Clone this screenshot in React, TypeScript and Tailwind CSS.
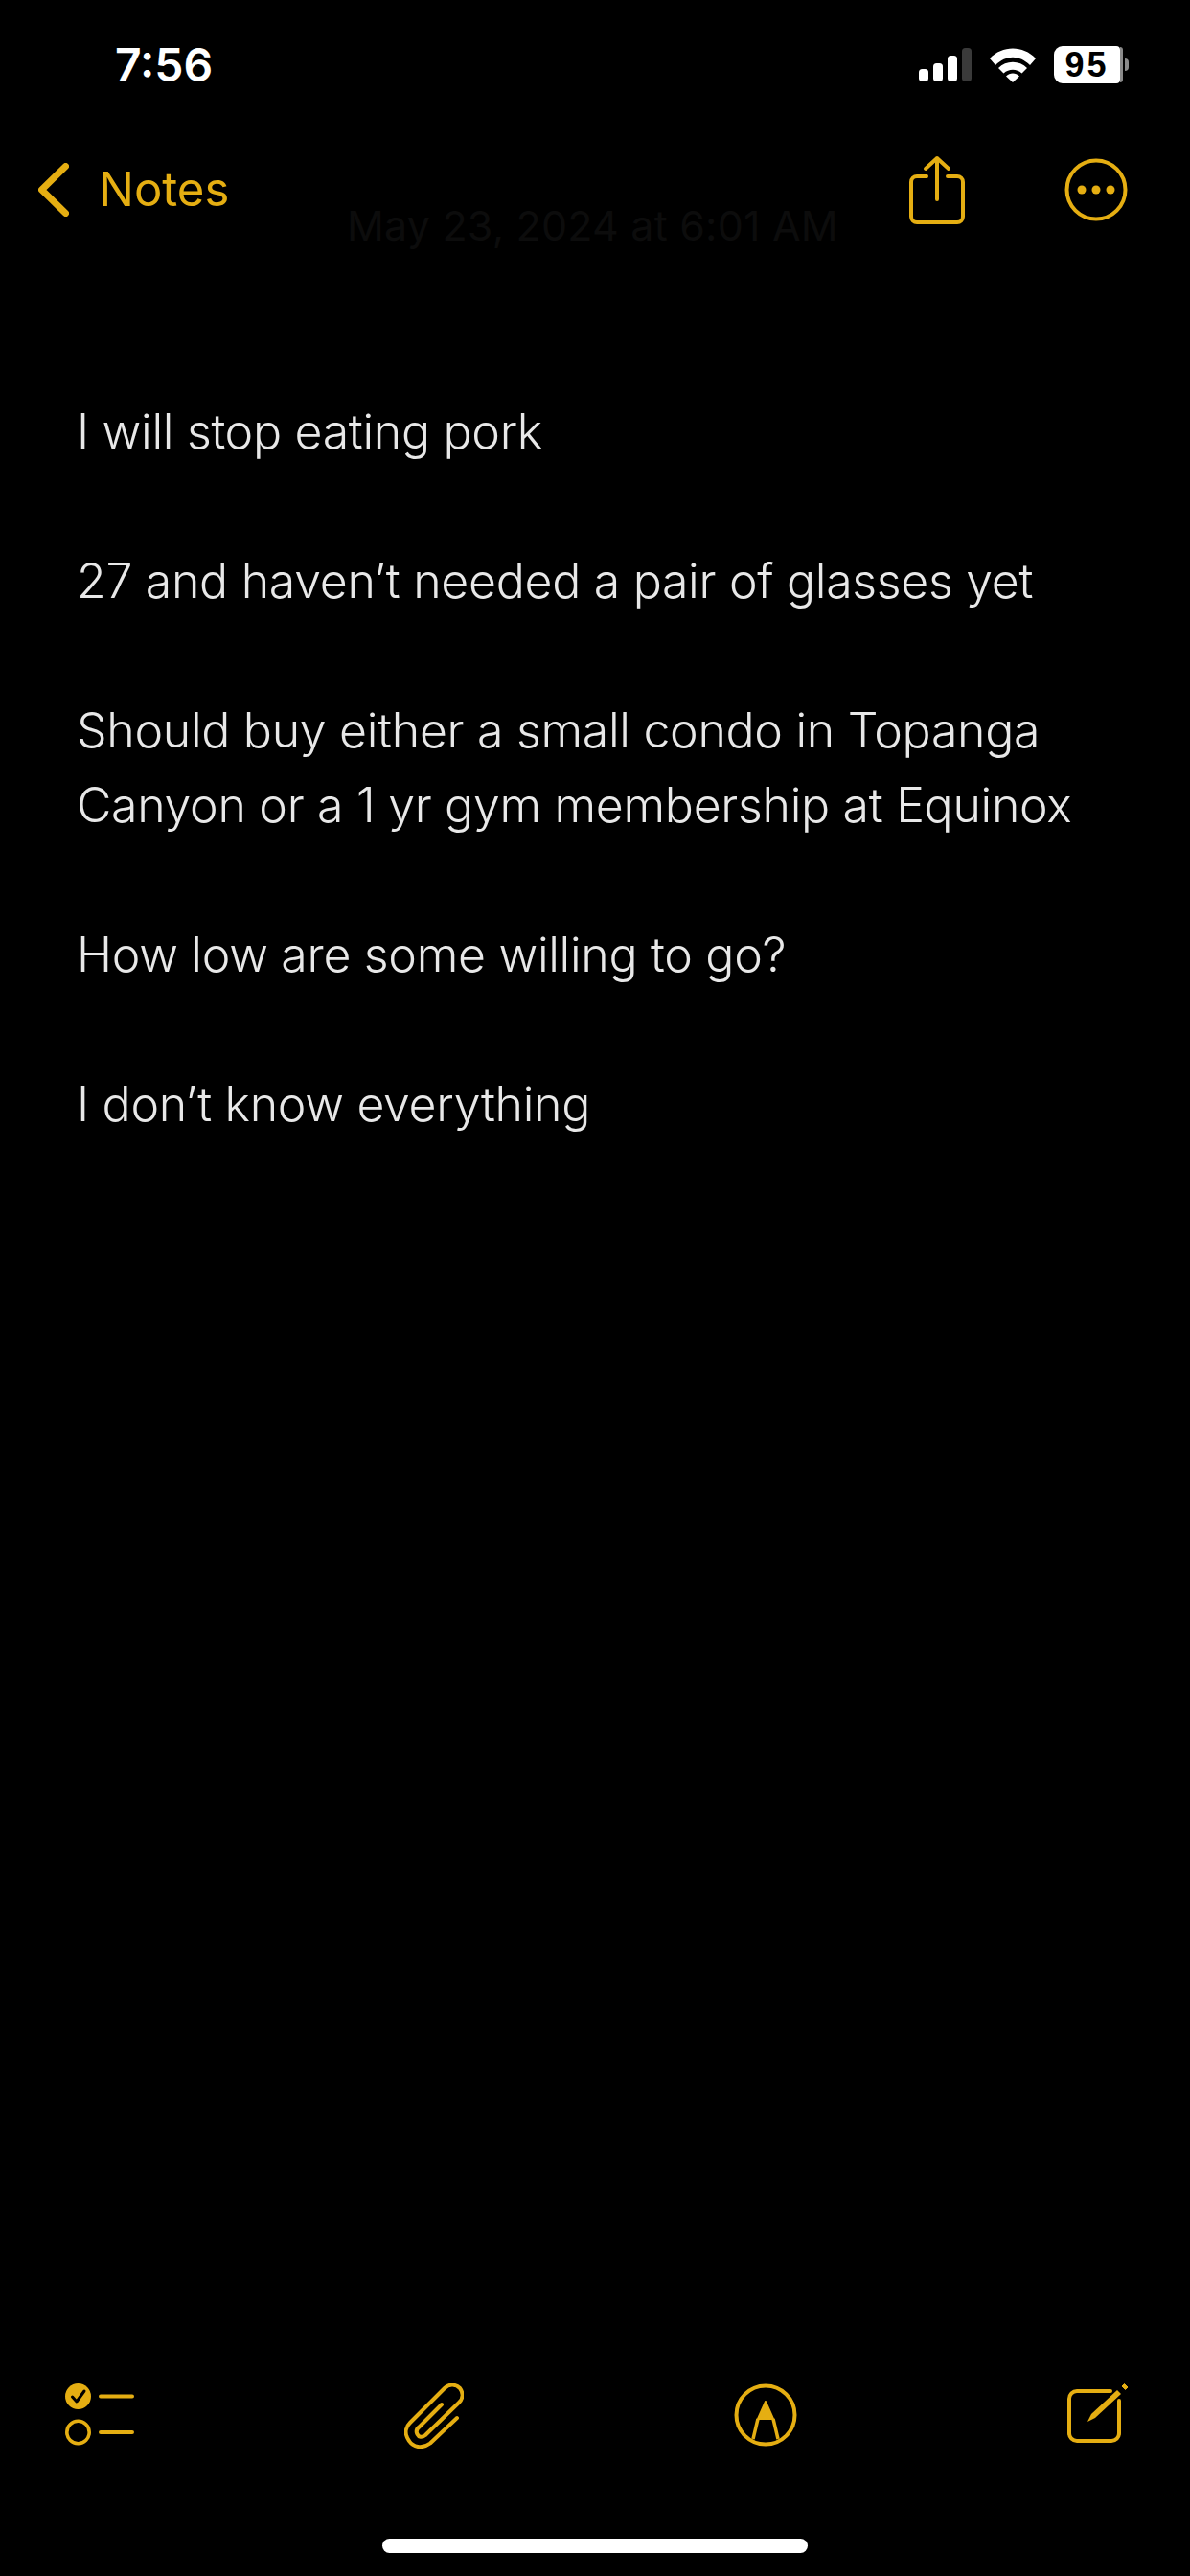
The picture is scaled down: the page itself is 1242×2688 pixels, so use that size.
const amber = "#e5ae12";

function StatusBar() {
  return (
    <div className="flex h-[150px] items-start justify-between pl-[120px] pr-[64px] pt-[48px]">
      <span className="text-[48px] font-semibold leading-[39px] text-white">7:56</span>
      <div className="flex items-center gap-[19px]">
        <svg width="56" height="36" viewBox="0 0 56 36" fill="#fff">
          <rect x="1" y="22" width="10" height="13" rx="3.5" />
          <rect x="16" y="16" width="10" height="19" rx="3.5" />
          <rect x="31" y="8" width="10" height="27" rx="3.5" />
          <rect x="46" y="0" width="10" height="35" rx="3.5" fill="#3a3a3a" />
        </svg>
        <svg width="48" height="36" viewBox="0 0 48 36" fill="#fff">
          <path d="M0 11C13-3 35-3 48 11L42 18C31 7 17 7 6 18Z" />
          <path d="M9 21C17 12.500 31 12.500 39 21L33.500 26.500C28 21.500 20 21.500 14.500 26.500Z" />
          <path d="M24 36L17 29.500C21 25.500 27 25.500 31 29.500Z" />
        </svg>
        <div className="flex items-center">
          <div className="flex h-[39px] w-[69px] items-center justify-center rounded-l-[9px] rounded-r-[4px] bg-white text-[36px] font-bold tracking-[3px] text-black [font-family:'Liberation_Sans',sans-serif]">
            95
          </div>
          <div className="h-[37px] w-[3px] rounded-r-[3px] bg-[#8a8a8a]" />
          <div className="ml-[2px] h-[13px] w-[4px] rounded-r-full bg-[#8a8a8a]" />
        </div>
      </div>
    </div>
  );
}

function NavBar() {
  return (
    <div className="relative flex h-[96px] items-center">
      <span className="absolute left-[362px] top-[60px] text-[43px] leading-[50px] tracking-[0.2px] text-[#0c0c0c]">
        May 23, 2024 at 6:01 AM
      </span>
      <svg className="ml-[40px]" width="32" height="56" viewBox="0 0 32 56" fill="none" stroke={amber} strokeWidth="7" strokeLinecap="round" strokeLinejoin="round">
        <path d="M28.500 3.500L3.500 28l25 24.500" />
      </svg>
      <span className="ml-[31px] text-[49px] leading-[60px] text-[#e5ae12]">Notes</span>
      <div className="ml-auto mr-[65px] flex items-center gap-[104px]">
        <svg width="58" height="72" viewBox="0 0 58 72" fill="none" stroke={amber} strokeWidth="4" strokeLinecap="round" strokeLinejoin="round">
          <path d="M18 22H8a6 6 0 0 0-6 6v36a6 6 0 0 0 6 6h42a6 6 0 0 0 6-6V28a6 6 0 0 0-6-6H40" />
          <path d="M29 46V3M17 14L29 3l12 11" />
        </svg>
        <svg width="66" height="66" viewBox="0 0 66 66" fill="none">
          <circle cx="33" cy="33" r="30.500" stroke={amber} strokeWidth="4" />
          <circle cx="18" cy="33" r="4.500" fill={amber} />
          <circle cx="33" cy="33" r="4.500" fill={amber} />
          <circle cx="48" cy="33" r="4.500" fill={amber} />
        </svg>
      </div>
    </div>
  );
}

function NoteBody() {
  return (
    <div className="pl-[80px] pt-[165px] text-[50px] font-light leading-[78px] tracking-[-0.3px] text-[#e8e8e8]">
      <p>I will stop eating pork</p>
      <p className="mt-[78px]">27 and haven’t needed a pair of glasses yet</p>
      <p className="mt-[78px]">
        Should buy either a small condo in Topanga
        <br />
        Canyon or a 1 yr gym membership at Equinox
      </p>
      <p className="mt-[78px]">How low are some willing to go?</p>
      <p className="mt-[78px]">I don’t know everything</p>
    </div>
  );
}

function ChecklistIcon() {
  return (
    <svg width="72" height="65" viewBox="0 0 72 65" fill="none">
      <circle cx="13.500" cy="13.500" r="13.500" fill={amber} />
      <path d="M7.500 14l4.500 5 8-11" stroke="#000" strokeWidth="3" strokeLinecap="round" strokeLinejoin="round" />
      <circle cx="13.500" cy="51" r="11.700" stroke={amber} strokeWidth="3.600" />
      <path d="M37 13.500h33M37 51h33" stroke={amber} strokeWidth="4" strokeLinecap="round" />
    </svg>
  );
}

function PaperclipIcon() {
  return (
    <svg width="62" height="68" viewBox="0 0 62 68" fill="none" stroke={amber} strokeWidth="4" strokeLinecap="round" strokeLinejoin="round">
      <path d="M55 36L27 62.500C18 69 9 66 5 60C0 53 1 46 6 41L42 5C47 0 54 1 58 5C61 9 62 15 57 20L22 54C18 57 15 56 13.500 53C12 50 13 47 16 45L39 22" />
    </svg>
  );
}

function MarkupIcon() {
  return (
    <svg width="66" height="66" viewBox="0 0 66 66" fill="none">
      <circle cx="33" cy="33" r="30.500" stroke={amber} strokeWidth="4" />
      <path d="M33 19l-8 18h16z" fill={amber} stroke={amber} strokeWidth="2" strokeLinejoin="round" />
      <path d="M25 37l-5 21M41 37l5 21" stroke={amber} strokeWidth="3.500" />
    </svg>
  );
}

function ComposeIcon() {
  return (
    <svg width="64" height="66" viewBox="0 0 64 66" fill="none">
      <path d="M45 8H10a8 8 0 0 0-8 8v36a8 8 0 0 0 8 8h36a8 8 0 0 0 8-8V18" stroke={amber} strokeWidth="4" strokeLinecap="round" />
      <path d="M21 40L25 32L52 7L56 11L29 36Z" fill={amber} />
      <path d="M57 3l2.500-2.500 3.500 3.500-2.500 2.500z" fill={amber} stroke={amber} strokeWidth="1" strokeLinejoin="round" />
    </svg>
  );
}

function Toolbar() {
  return (
    <div className="mt-auto flex items-start justify-between pb-[94px] pl-[68px] pr-[64px]">
      <ChecklistIcon />
      <PaperclipIcon />
      <MarkupIcon />
      <ComposeIcon />
    </div>
  );
}

export default function App() {
  return (
    <div className="flex h-[2688px] w-[1242px] flex-col overflow-hidden bg-black [font-family:Inter,sans-serif]">
      <StatusBar />
      <NavBar />
      <NoteBody />
      <Toolbar />
      {/* home indicator */}
      <div className="mx-auto mb-[24px] h-[15px] w-[444px] rounded-full bg-white" />
    </div>
  );
}
